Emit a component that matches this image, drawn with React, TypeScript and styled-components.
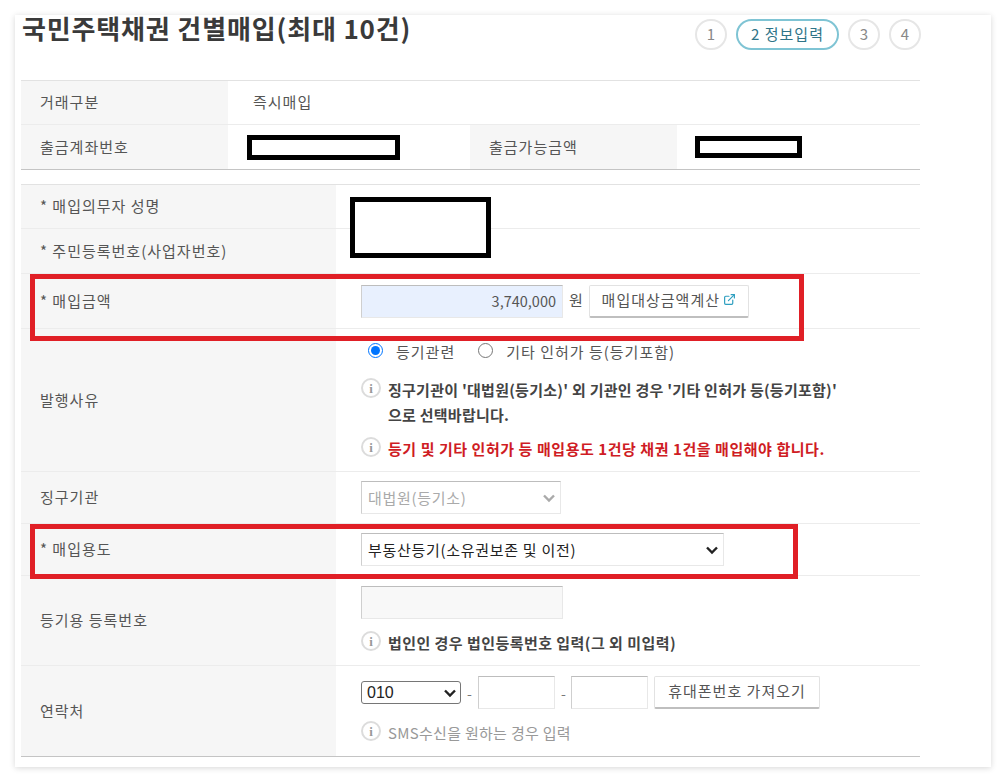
import React from "react";
import styled, { createGlobalStyle } from "styled-components";
import { ExternalLink } from "lucide-react";

const fontStack = `"Noto Sans CJK KR", "Noto Sans", sans-serif`;

const chevron = (color: string) =>
  `url("data:image/svg+xml,%3Csvg xmlns='http://www.w3.org/2000/svg' width='14' height='10' viewBox='0 0 14 10'%3E%3Cpath d='M2 2.5l5 5 5-5' fill='none' stroke='${color}' stroke-width='2.4'/%3E%3C/svg%3E")`;

const GlobalStyle = createGlobalStyle`
  html, body {
    margin: 0;
    padding: 0;
    background: #fff;
    font-family: ${fontStack};
  }
  * {
    box-sizing: border-box;
  }
`;

const Card = styled.div`
  position: relative;
  width: 976px;
  height: 752px;
  margin: 15px;
  padding: 0 71px 0 6px;
  background: #fff;
  box-shadow: 0 1px 6px rgba(0, 0, 0, 0.16);
`;

const Header = styled.div`
  display: flex;
  justify-content: space-between;
  align-items: flex-start;
  height: 65px;
`;

const Title = styled.h1`
  margin: -2px 0 0;
  padding-left: 1px;
  font-size: 26px;
  line-height: 30px;
  font-weight: 700;
  letter-spacing: 0.85px;
  color: #3a3a3a;
`;

const Steps = styled.div`
  display: flex;
  gap: 9px;
  margin-right: -1px;
  padding-top: 4px;
`;

const Step = styled.div<{ $active?: boolean }>`
  display: flex;
  align-items: center;
  justify-content: center;
  width: ${(p) => (p.$active ? "103px" : "32px")};
  height: 31px;
  padding-bottom: 1px;
  border-radius: 16px;
  background: #fff;
  border: ${(p) => (p.$active ? "2px solid #7fc4d4" : "2px solid #e6e6e6")};
  color: ${(p) => (p.$active ? "#2f7488" : "#888")};
  font-size: 15px;
  letter-spacing: ${(p) => (p.$active ? "1px" : "0")};
  line-height: 20px;
`;

const Table = styled.div`
  border-top: 1px solid #e2e2e2;
  border-bottom: 1px solid #c4c4c4;
`;

const Gap = styled.div`
  height: 14px;
`;

const Row = styled.div<{ $h: number }>`
  display: flex;
  height: ${(p) => p.$h}px;
  border-top: 1px solid #ececec;
  &:first-child {
    border-top: 0;
  }
`;

const Th = styled.div<{ $w: number }>`
  display: flex;
  align-items: center;
  flex: 0 0 ${(p) => p.$w}px;
  padding: 0 0 1px 19px;
  background: #f6f6f6;
  color: #555;
  font-size: 15px;
  letter-spacing: 1px;
  line-height: 20px;
  white-space: nowrap;
`;

const Td = styled.div<{ $w?: number; $pad?: number }>`
  display: flex;
  align-items: center;
  ${(p) => (p.$w ? `flex: 0 0 ${p.$w}px;` : "flex: 1;")}
  padding-left: ${(p) => p.$pad ?? 25}px;
  color: #555;
  font-size: 15px;
  letter-spacing: 1px;
  line-height: 20px;
  min-width: 0;
`;

const Plain = styled.span`
  margin-bottom: 1px;
`;

const FormCell = styled.div<{ $top: number; $gap?: number }>`
  display: flex;
  flex-direction: column;
  flex: 1;
  gap: ${(p) => p.$gap ?? 0}px;
  padding: ${(p) => p.$top}px 0 0 25px;
  color: #555;
  font-size: 15px;
  letter-spacing: 1px;
  line-height: 20px;
`;

const Line = styled.div<{ $gap?: number; $mb?: number }>`
  display: flex;
  align-items: center;
  gap: ${(p) => p.$gap ?? 6}px;
  margin-bottom: ${(p) => p.$mb ?? 0}px;
  white-space: nowrap;
`;

const TextInput = styled.input<{ $w: number; $bg?: string }>`
  width: ${(p) => p.$w}px;
  height: 33px;
  padding: 0 6px 2px 8px;
  border: 1px solid #e8e8e8;
  border-top-color: #bdbdbd;
  border-left-color: #cfcfcf;
  outline: none;
  background: ${(p) => p.$bg ?? "#fff"};
  color: #555;
  font-family: ${fontStack};
  font-size: 14.5px;
  text-align: right;
`;

const Won = styled.span`
  margin-bottom: 3px;
  letter-spacing: 0;
`;

const Btn = styled.button<{ $w: number }>`
  display: inline-flex;
  align-items: center;
  justify-content: center;
  gap: 3px;
  width: ${(p) => p.$w}px;
  height: 33px;
  padding: 0 0 2px;
  border: 1px solid #e2e2e2;
  border-bottom: 2px solid #bfbfbf;
  border-radius: 2px;
  background: #fff;
  color: #555;
  font-family: ${fontStack};
  font-size: 15px;
  letter-spacing: 1px;
  line-height: 20px;
`;

const LinkIcon = styled(ExternalLink)`
  color: #2f9fc0;
`;

const Select = styled.select<{ $w: number; $muted?: boolean }>`
  appearance: none;
  width: ${(p) => p.$w}px;
  height: 33px;
  padding: 0 6px 1px 6px;
  border: 1px solid #e8e8e8;
  border-top-color: #bdbdbd;
  border-left-color: #cfcfcf;
  background: #fff ${(p) => chevron(p.$muted ? "%23aaa" : "%23222")} no-repeat right 4px center;
  color: ${(p) => (p.$muted ? "#aaa" : "#222")};
  font-family: ${fontStack};
  font-size: 15px;
  letter-spacing: 0.7px;
  outline: none;
  opacity: 1;
`;

const PhoneSelect = styled.select`
  appearance: none;
  width: 100px;
  height: 23px;
  padding: 0 5px;
  border: 1px solid #767676;
  border-radius: 3px;
  background: #fff ${chevron("%23222")} no-repeat right 3px center;
  color: #222;
  font-family: "Liberation Sans", sans-serif;
  font-size: 16px;
  outline: none;
`;

const Radio = styled.input<{ $ml: number }>`
  width: 15px;
  height: 15px;
  margin: 0 0 4px ${(p) => p.$ml}px;
`;

const RadioLabel = styled.label`
  display: flex;
  align-items: center;
  gap: 13px;
`;

const Hint = styled.div<{ $tone?: "bold" | "red" | "muted"; $ls?: number }>`
  display: flex;
  gap: 7px;
  font-weight: ${(p) => (p.$tone === "muted" ? 400 : 700)};
  color: ${(p) =>
    p.$tone === "red" ? "#cf1c24" : p.$tone === "muted" ? "#999" : "#444"};
  line-height: 25px;
  font-size: 15px;
  letter-spacing: ${(p) => p.$ls ?? 0.45}px;
  white-space: nowrap;
`;

const InfoIcon = styled.span`
  display: flex;
  flex: 0 0 20px;
  align-items: center;
  justify-content: center;
  width: 20px;
  height: 20px;
  margin-top: 1px;
  border: 2px solid #dcdcdc;
  border-radius: 50%;
  color: #999;
  font-family: "Liberation Serif", serif;
  font-size: 13px;
  font-weight: 700;
  letter-spacing: 0;
  line-height: 1;
`;

const Dash = styled.span<{ $w: number }>`
  width: ${(p) => p.$w}px;
  color: #777;
  font-size: 14px;
  letter-spacing: 0;
`;

const Redact = styled.div<{ $w: number; $h: number }>`
  width: ${(p) => p.$w}px;
  height: ${(p) => p.$h}px;
  border: 5px solid #000;
  background: #fff;
`;

const RedactOver = styled(Redact)`
  position: absolute;
  left: 335px;
  top: 182px;
`;

const Annotation = styled.div<{ $top: number; $w: number; $h: number }>`
  position: absolute;
  left: 15px;
  top: ${(p) => p.$top}px;
  width: ${(p) => p.$w}px;
  height: ${(p) => p.$h}px;
  border: 5px solid #e01f26;
  pointer-events: none;
`;

export default function App() {
  return (
    <>
      <GlobalStyle />
      <Card>
        <Header>
          <Title>국민주택채권 건별매입(최대 10건)</Title>
          <Steps>
            <Step>1</Step>
            <Step $active>2 정보입력</Step>
            <Step>3</Step>
            <Step>4</Step>
          </Steps>
        </Header>

        <Table>
          <Row $h={43}>
            <Th $w={207}>거래구분</Th>
            <Td>
              <Plain>즉시매입</Plain>
            </Td>
          </Row>
          <Row $h={45}>
            <Th $w={207}>출금계좌번호</Th>
            <Td $w={242} $pad={19}>
              <Redact $w={153} $h={25} />
            </Td>
            <Th $w={207}>출금가능금액</Th>
            <Td $pad={18}>
              <Redact $w={107} $h={22} />
            </Td>
          </Row>
        </Table>

        <Gap />

        <Table>
          <Row $h={43}>
            <Th $w={315}>* 매입의무자 성명</Th>
            <Td />
          </Row>
          <Row $h={45}>
            <Th $w={315}>* 주민등록번호(사업자번호)</Th>
            <Td />
          </Row>
          <Row $h={55}>
            <Th $w={315}>* 매입금액</Th>
            <Td>
              <Line $gap={6}>
                <TextInput $w={202} $bg="#e8f0fe" readOnly value="3,740,000" />
                <Won>원</Won>
                <Btn $w={160}>
                  매입대상금액계산
                  <LinkIcon size={13} strokeWidth={2.2} />
                </Btn>
              </Line>
            </Td>
          </Row>
          <Row $h={143}>
            <Th $w={315}>발행사유</Th>
            <FormCell $top={13} $gap={9}>
              <Line $gap={13} $mb={6}>
                <RadioLabel>
                  <Radio $ml={7} type="radio" name="reason" defaultChecked />
                  등기관련
                </RadioLabel>
                <RadioLabel>
                  <Radio $ml={10} type="radio" name="reason" />
                  기타 인허가 등(등기포함)
                </RadioLabel>
              </Line>
              <Hint $ls={0.25}>
                <InfoIcon>i</InfoIcon>
                <div>
                  징구기관이 '대법원(등기소)' 외 기관인 경우 '기타 인허가 등(등기포함)'
                  <br />
                  으로 선택바랍니다.
                </div>
              </Hint>
              <Hint $tone="red" $ls={0.55}>
                <InfoIcon>i</InfoIcon>
                등기 및 기타 인허가 등 매입용도 1건당 채권 1건을 매입해야 합니다.
              </Hint>
            </FormCell>
          </Row>
          <Row $h={52}>
            <Th $w={315}>징구기관</Th>
            <Td>
              <Select $w={200} $muted disabled>
                <option>대법원(등기소)</option>
              </Select>
            </Td>
          </Row>
          <Row $h={52}>
            <Th $w={315}>* 매입용도</Th>
            <Td>
              <Select $w={363}>
                <option>부동산등기(소유권보존 및 이전)</option>
              </Select>
            </Td>
          </Row>
          <Row $h={90}>
            <Th $w={315}>등기용 등록번호</Th>
            <FormCell $top={10} $gap={11}>
              <TextInput $w={202} $bg="#f8f8f8" readOnly />
              <Hint>
                <InfoIcon>i</InfoIcon>
                법인인 경우 법인등록번호 입력(그 외 미입력)
              </Hint>
            </FormCell>
          </Row>
          <Row $h={91}>
            <Th $w={315}>연락처</Th>
            <FormCell $top={10} $gap={11}>
              <Line $gap={6}>
                <PhoneSelect>
                  <option>010</option>
                </PhoneSelect>
                <Dash $w={5}>-</Dash>
                <TextInput $w={77} readOnly />
                <Dash $w={4}>-</Dash>
                <TextInput $w={77} readOnly />
                <Btn $w={166}>휴대폰번호 가져오기</Btn>
              </Line>
              <Hint $tone="muted" $ls={0.3}>
                <InfoIcon>i</InfoIcon>
                SMS수신을 원하는 경우 입력
              </Hint>
            </FormCell>
          </Row>
        </Table>

        <RedactOver $w={141} $h={61} />
        <Annotation $top={259} $w={774} $h={67} />
        <Annotation $top={509} $w={768} $h={55} />
      </Card>
    </>
  );
}
